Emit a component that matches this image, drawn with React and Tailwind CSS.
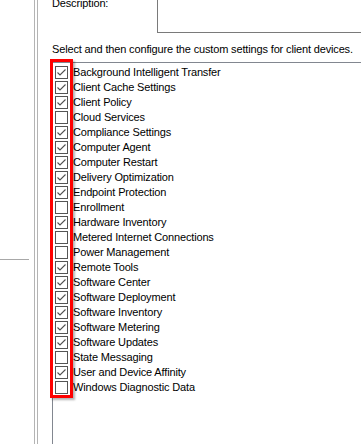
import React from 'react';

const settings = [
  { name: 'Background Intelligent Transfer', on: true },
  { name: 'Client Cache Settings', on: true },
  { name: 'Client Policy', on: true },
  { name: 'Cloud Services', on: false },
  { name: 'Compliance Settings', on: true },
  { name: 'Computer Agent', on: true },
  { name: 'Computer Restart', on: true },
  { name: 'Delivery Optimization', on: true },
  { name: 'Endpoint Protection', on: true },
  { name: 'Enrollment', on: false },
  { name: 'Hardware Inventory', on: true },
  { name: 'Metered Internet Connections', on: false },
  { name: 'Power Management', on: false },
  { name: 'Remote Tools', on: true },
  { name: 'Software Center', on: true },
  { name: 'Software Deployment', on: true },
  { name: 'Software Inventory', on: true },
  { name: 'Software Metering', on: true },
  { name: 'Software Updates', on: true },
  { name: 'State Messaging', on: false },
  { name: 'User and Device Affinity', on: true },
  { name: 'Windows Diagnostic Data', on: false },
];

function CheckBox({ checked }) {
  return (
    <span className="w-[13px] h-[13px] shrink-0 border border-[#555] bg-white flex">
      {checked && (
        <svg width="11" height="11" viewBox="0 0 11 11">
          <path d="M1.5 5.5 L4 8 L9.5 2.5" fill="none" stroke="#505050" strokeWidth="1.1" />
        </svg>
      )}
    </span>
  );
}

export default function App() {
  return (
    <div className="w-[361px] h-[444px] overflow-hidden bg-white flex relative font-['Liberation_Sans',Arial,sans-serif] text-[11px] leading-[13px] tracking-[-0.15px] text-black">
      {/* left nav pane */}
      <div className="w-[34px] shrink-0 pt-[259px]">
        <div className="w-[29px] h-px bg-[#a8a8a8]" />
      </div>
      <div className="w-[3px] shrink-0 border-l border-[#b4b4b4]" />

      {/* page */}
      <div className="flex-1 min-w-0 border-l border-[#b4b4b4] pl-[14px] flex flex-col">
        <div className="flex h-[33px] shrink-0">
          <div className="w-[105px] shrink-0 -mt-[3px]">Description:</div>
          <div className="flex-1 border-l border-b border-[#7a7a7a]" />
        </div>

        <p className="mt-[10px] whitespace-nowrap">Select and then configure the custom settings for client devices.</p>

        <div className="mt-[6px] flex-1 border-l border-t border-[#828790] pt-[2px] pl-[2px]">
          {settings.map(s => (
            <div key={s.name} className="h-[15px] flex items-center gap-[5px] whitespace-nowrap">
              <CheckBox checked={s.on} />
              <span>{s.name}</span>
            </div>
          ))}
        </div>
      </div>

      {/* annotation highlight */}
      <div className="absolute left-[50px] top-[59px] w-[23px] h-[339px] border-[3px] border-[#f00] shadow-[2px_2px_2px_rgba(0,0,0,0.3)]" />
    </div>
  );
}
